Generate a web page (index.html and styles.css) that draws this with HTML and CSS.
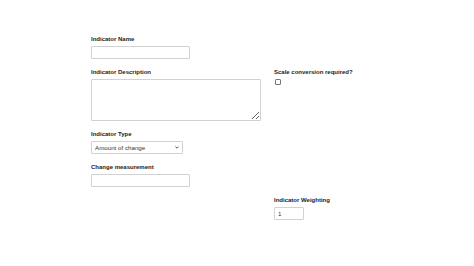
FILE: index.html
```html
<!DOCTYPE html>
<html lang="en">
<head>
<meta charset="utf-8">
<title>Indicator</title>
<link rel="stylesheet" href="styles.css">
</head>
<body>
<form class="form">
  <div class="field name">
    <label class="label" for="iname">Indicator Name</label>
    <input class="input input-name" id="iname" type="text">
  </div>
  <div class="field desc">
    <label class="label" for="idesc">Indicator Description</label>
    <textarea class="input textarea" id="idesc"></textarea>
  </div>
  <div class="field scale">
    <label class="label" for="iscale">Scale conversion required?</label>
    <input class="check" id="iscale" type="checkbox">
  </div>
  <div class="field type">
    <label class="label" for="itype">Indicator Type</label>
    <div class="select-wrap">
      <select class="input select" id="itype">
        <option>Amount of change</option>
      </select>
      <svg class="chevron" width="4" height="3" viewBox="0 0 4 3"><path d="M0.4 0.6 L2 2.2 L3.6 0.6" fill="none" stroke="#333" stroke-width="0.8"/></svg>
    </div>
  </div>
  <div class="field change">
    <label class="label" for="ichange">Change measurement</label>
    <input class="input input-name" id="ichange" type="text">
  </div>
  <div class="field weight">
    <label class="label" for="iweight">Indicator Weighting</label>
    <input class="input input-weight" id="iweight" type="text" value="1">
  </div>
</form>
</body>
</html>
```
FILE: styles.css
```css
html, body {
  margin: 0;
  padding: 0;
  background: #ffffff;
}
body {
  font-family: "Liberation Sans", Arial, sans-serif;
  color: #222222;
}
.form {
  display: grid;
  grid-template-columns: 170px 100px;
  column-gap: 13px;
  padding: 36px 0 0 91px;
}
.field {
  display: flex;
  flex-direction: column;
  align-items: flex-start;
  margin-bottom: 10px;
}
.name { grid-column: 1; grid-row: 1; }
.desc { grid-column: 1; grid-row: 2; }
.scale { grid-column: 2; grid-row: 2; }
.type { grid-column: 1; grid-row: 3; }
.change { grid-column: 1; grid-row: 4; }
.weight { grid-column: 2; grid-row: 5; }
.label {
  display: block;
  font-size: 6px;
  line-height: 7px;
  font-weight: bold;
  margin-bottom: 3px;
  color: #222222;
}
.input {
  box-sizing: border-box;
  margin: 0;
  border: 1px solid #d2d2d2;
  border-radius: 1px;
  background: #ffffff;
  font-family: "Liberation Sans", Arial, sans-serif;
  font-size: 6.2px;
  color: #333333;
  height: 13px;
  padding: 0 3px;
  outline: none;
}
.input-name { width: 99px; }
.textarea {
  width: 170px;
  height: 42px;
  resize: vertical;
}
.select-wrap {
  position: relative;
  display: flex;
}
.select {
  -webkit-appearance: none;
  appearance: none;
  width: 92px;
  padding: 0 8px 0 3px;
}
.chevron {
  position: absolute;
  right: 4px;
  top: 5px;
  pointer-events: none;
}
.input-weight { width: 30px; }
.check {
  -webkit-appearance: none;
  appearance: none;
  box-sizing: border-box;
  width: 6px;
  height: 6px;
  margin: 0 0 0 1px;
  border: 1px solid #777777;
  border-radius: 1px;
  background: #ffffff;
}
```
